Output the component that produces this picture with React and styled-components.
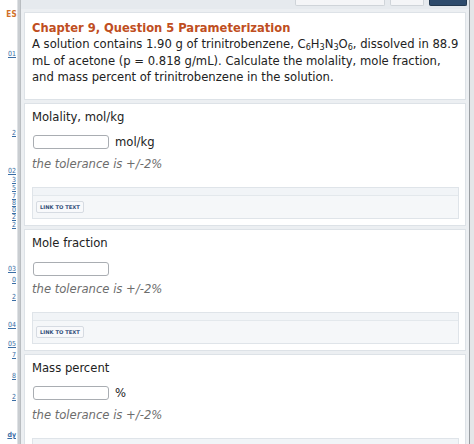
import React from "react";
import styled, { createGlobalStyle } from "styled-components";

const Global = createGlobalStyle`
  html, body { margin: 0; padding: 0; }
  body {
    width: 474px; height: 444px; overflow: hidden;
    background: #eceff2;
    font-family: "DejaVu Sans Condensed", "DejaVu Sans", Verdana, sans-serif;
    color: #222;
  }
`;

const Page = styled.div`
  display: flex;
  width: 474px;
  height: 444px;
  overflow: hidden;
`;

const Sidebar = styled.div`
  width: 17px;
  flex: none;
  background: #fff;
  overflow: hidden;
  display: flex;
  flex-direction: column;
  align-items: flex-end;
`;

const SideHead = styled.div`
  margin-top: 10px;
  font-size: 8px;
  font-weight: bold;
  color: #d0702a;
  letter-spacing: 0.3px;
  line-height: 10px;
  white-space: nowrap;
`;

const SideLink = styled.a`
  display: block;
  margin-top: ${(p) => p.$gap}px;
  font-size: 7px;
  line-height: 7px;
  color: #3b6ea5;
  text-decoration: underline;
  white-space: nowrap;
  padding-right: 1px;
  font-weight: ${(p) => (p.$bold ? "bold" : "normal")};
`;

const Divider = styled.div`
  width: 4px;
  flex: none;
  background: #c9cdd1;
  border-left: 1px solid #dfe2e5;
  border-right: 1px solid #b9bdc1;
  box-sizing: border-box;
`;

const Main = styled.div`
  flex: 1;
  padding: 0 3px 0 3px;
  display: flex;
  flex-direction: column;
  min-width: 0;
`;

const TopStrip = styled.div`
  height: 9px;
  flex: none;
  display: flex;
  justify-content: flex-end;
  align-items: flex-end;
  gap: 5px;
  padding-right: 2px;
  padding-bottom: 3px;
  box-sizing: border-box;
  background: #e6eaee;
  margin: 0 -3px;
`;

const TopBtn = styled.div`
  width: ${(p) => p.$w}px;
  height: 5px;
  background: ${(p) => (p.$dark ? "#2e4b6c" : "#f4f5f7")};
  border: 1px solid ${(p) => (p.$dark ? "#22384f" : "#cfd4d9")};
  border-top: none;
  border-radius: 0 0 2px 2px;
`;

const Panels = styled.div`
  display: flex;
  flex-direction: column;
  gap: 3px;
  padding-top: 3px;
`;

const Panel = styled.div`
  background: #fff;
  border: 1px solid #dde2e7;
  padding: ${(p) => p.$pad || "5px 6px 6px 7px"};
  box-sizing: border-box;
`;

const Title = styled.div`
  font-size: 12.8px;
  font-weight: bold;
  color: #bf4e21;
  line-height: 16px;
`;

const Body = styled.div`
  font-size: 12.9px;
  line-height: 16.5px;
  color: #222;
  sub { font-size: 9px; vertical-align: -2px; line-height: 0; }
`;

const Label = styled.div`
  font-size: 12.9px;
  line-height: 16px;
  color: #222;
  margin-bottom: ${(p) => p.$mb}px;
`;

const AnswerRow = styled.div`
  display: flex;
  align-items: center;
  gap: 6px;
  height: ${(p) => p.$h}px;
  padding-left: 1px;
`;

const Input = styled.input`
  width: 76px;
  height: 14px;
  box-sizing: border-box;
  border: 1px solid #a9adb2;
  border-radius: 3px;
  background: #fff;
  margin: 0;
  padding: 0;
`;

const Unit = styled.span`
  font-size: 12.9px;
  line-height: 16px;
  color: #222;
`;

const Tolerance = styled.div`
  font-size: 12.9px;
  font-style: italic;
  color: #6d6d6d;
  line-height: 16px;
  margin-top: ${(p) => p.$mt}px;
`;

const LinkBox = styled.div`
  margin-top: 15px;
  border: 1px solid #dfe4e9;
  background: #f5f7f9;
  height: 32px;
  box-sizing: border-box;
  display: flex;
  flex-direction: column;
`;

const LinkBoxTop = styled.div`
  height: 7px;
  border-bottom: 1px solid #e3e8ec;
  background: #f1f4f7;
`;

const LinkBoxBody = styled.div`
  flex: 1;
  display: flex;
  align-items: center;
  padding-left: 3px;
`;

const LinkButton = styled.span`
  display: inline-block;
  font-family: "DejaVu Sans", Verdana, sans-serif;
  font-size: 5.2px;
  font-weight: bold;
  color: #34507a;
  background: #f8f9fb;
  border: 1px solid #d6dbe2;
  border-radius: 2px;
  padding: 2px 3px;
  line-height: 6px;
  white-space: nowrap;
`;

const Scrollbar = styled.div`
  width: 5px;
  flex: none;
  background: #e4e6e8;
  border-left: 1px solid #9a9ea2;
  box-sizing: border-box;
`;

const sideLinks = [
  { t: "01", g: 31 },
  { t: "2", g: 72 },
  { t: "02", g: 31 },
  { t: "3", g: 2 },
  { t: "5", g: 1 },
  { t: "7", g: 1 },
  { t: "8", g: 0 },
  { t: "0", g: 0 },
  { t: "2", g: 0 },
  { t: "2", g: 1 },
  { t: "03", g: 37 },
  { t: "0", g: 4 },
  { t: "2", g: 10 },
  { t: "04", g: 21 },
  { t: "05", g: 12 },
  { t: "7", g: 4 },
  { t: "8", g: 14 },
  { t: "2", g: 14 },
  { t: "dy", g: 31, b: true },
];

function QuestionPart({ label, unit }) {
  return (
    <Panel>
      <Label $mb={unit ? 9 : 11}>{label}</Label>
      <AnswerRow $h={unit ? 16 : 14}>
        <Input type="text" />
        {unit && <Unit>{unit}</Unit>}
      </AnswerRow>
      <Tolerance $mt={unit ? 6 : 5}>the tolerance is +/-2%</Tolerance>
      <LinkBox>
        <LinkBoxTop />
        <LinkBoxBody>
          <LinkButton>LINK TO TEXT</LinkButton>
        </LinkBoxBody>
      </LinkBox>
    </Panel>
  );
}

export default function App() {
  return (
    <>
      <Global />
      <Page>
        <Sidebar>
          <SideHead>ES</SideHead>
          {sideLinks.map((l, i) => (
            <SideLink key={i} $gap={l.g} $bold={l.b}>
              {l.t}
            </SideLink>
          ))}
        </Sidebar>
        <Divider />
        <Main>
          <TopStrip>
            <TopBtn $w={88} />
            <TopBtn $w={32} />
            <TopBtn $w={36} $dark />
          </TopStrip>
          <Panels>
            <Panel $pad="7px 4px 13px 7px">
              <Title>Chapter 9, Question 5 Parameterization</Title>
              <Body>
                A solution contains 1.90 g of trinitrobenzene, C<sub>6</sub>H
                <sub>3</sub>N<sub>3</sub>O<sub>6</sub>, dissolved in 88.9 mL
                of acetone (p = 0.818 g/mL). Calculate the molality, mole
                fraction, and mass percent of trinitrobenzene in the solution.
              </Body>
            </Panel>
            <QuestionPart label="Molality, mol/kg" unit="mol/kg" />
            <QuestionPart label="Mole fraction" />
            <QuestionPart label="Mass percent" unit="%" />
          </Panels>
        </Main>
        <Scrollbar />
      </Page>
    </>
  );
}
